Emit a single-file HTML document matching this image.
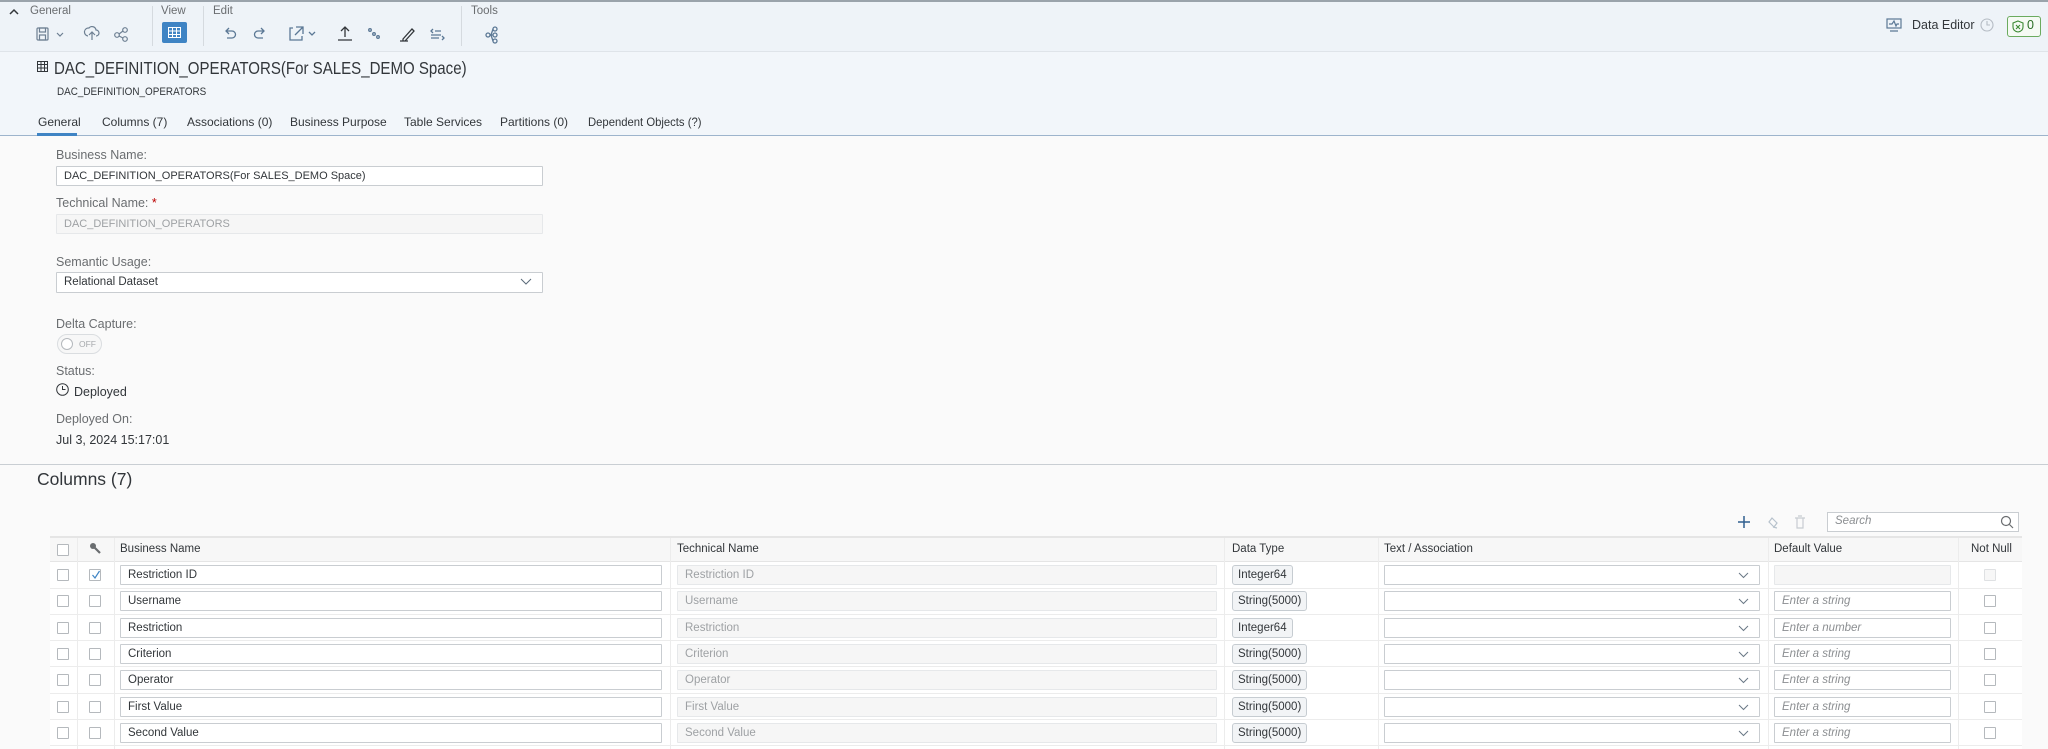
<!DOCTYPE html>
<html><head><meta charset="utf-8">
<style>
*{box-sizing:border-box;margin:0;padding:0}
body{width:2048px;height:749px;overflow:hidden;background:#fafafa;font-family:"Liberation Sans",sans-serif;color:#32363a;position:relative}
.a{position:absolute;white-space:nowrap}
.lbl{font-size:12.5px;color:#6a6d70}
.t{font-size:12.5px;color:#32363a}
.ic{position:absolute}
.inp{position:absolute;height:21px;border:1px solid #c9cdd1;background:#fff;font-size:12px;padding:3px 7px;color:#32363a;border-radius:1px}
.dis{background:#f6f6f6;border-color:#e6e8ea;color:#9ea1a4}
.cb{position:absolute;width:12px;height:12px;border:1px solid #b5b9bd;background:#fff;border-radius:1px}
.tok{position:absolute;height:21px;border:1px solid #c6ccd1;background:#f2f4f6;font-size:11.5px;padding:3px 5px;color:#32363a;border-radius:3px}
.ph{font-style:italic;color:#8b8e91}
.chev{position:absolute;right:10px;top:5px}
</style></head><body>
<div class="a" style="left:0;top:0;width:2048px;height:52px;background:#eef3f8;border-top:2px solid #9aa3ab;border-bottom:1px solid #dfe4e9"></div>
<svg class="ic" style="left:9px;top:8px" width="10" height="8"><path d="M1 6 L5 2 L9 6" stroke="#32363a" stroke-width="1.5" fill="none"/></svg>
<div class="a lbl" style="left:30px;top:5px;font-size:11.5px">General</div>
<div class="a lbl" style="left:161px;top:5px;font-size:11.5px">View</div>
<div class="a lbl" style="left:213px;top:5px;font-size:11.5px">Edit</div>
<div class="a lbl" style="left:471px;top:5px;font-size:11.5px">Tools</div>
<div class="a" style="left:152px;top:6px;width:1px;height:40px;background:#d5dadf"></div>
<div class="a" style="left:203px;top:6px;width:1px;height:40px;background:#d5dadf"></div>
<div class="a" style="left:461px;top:6px;width:1px;height:40px;background:#d5dadf"></div>
<svg class="ic" style="left:36px;top:26px" width="110" height="16" fill="none" stroke="#6d7f92" stroke-width="1.2">
<rect x="1" y="2" width="11" height="12" rx="1"/><rect x="3.5" y="2" width="6" height="4"/><rect x="3.5" y="9" width="6" height="5"/>
<path d="M21 7 l3 3 l3 -3"/>
<path d="M52 10 a4 4 0 0 1 1 -8 a4 4 0 0 1 7 2 a3 3 0 0 1 0 6 M56 14 v-8 M53 9 l3 -3 l3 3"/>
<circle cx="81" cy="9" r="2.3"/><circle cx="89" cy="4" r="2.3"/><circle cx="89" cy="13" r="2.3"/><path d="M83 8 l4 -3 M83 10 l4 2"/>
</svg>
<div class="a" style="left:162px;top:22px;width:25px;height:21px;background:#3f84c4;border-radius:2px"></div>
<svg class="ic" style="left:168px;top:27px" width="13" height="11" stroke="#fff" stroke-width="1" fill="none"><rect x="0.5" y="0.5" width="12" height="10"/><path d="M0.5 4h12M0.5 7.5h12M4.5 0.5v10M8.5 0.5v10"/></svg>
<svg class="ic" style="left:220px;top:24px" width="280" height="20" fill="none" stroke="#5b7895" stroke-width="1.3">
<path d="M9 4 L6 7 L9 10 M6 7 H12 a3.5 3.5 0 0 1 0 7 H7"/>
<path d="M41 4 L44 7 L41 10 M44 7 H38 a3.5 3.5 0 0 0 0 7 H43"/>
<path d="M73 4 H70 V16 H82 V12 M76 3 H83 V10 M83 3 L75 11"/>
<path d="M89 8 l3 3 l3 -3"/>
<path d="M118 16 h14 M125 13 V3 M121 7 l4 -4 l4 4" stroke="#32363a"/>
<circle cx="150" cy="6" r="1.3"/><circle cx="154" cy="10" r="1.3"/><circle cx="158" cy="13" r="1.3"/>
<path d="M183 15 l9 -10 l2 2 l-9 10 h-2 z M180 17 h8" stroke="#32363a"/>
<path d="M213 5 l-2 2 l2 2 M215 7 h6 M211 11 h10 M211 14 h8 M222 12 l2 2 l-2 2"/>
<circle cx="268" cy="11" r="2"/><circle cx="275" cy="5" r="2"/><circle cx="275" cy="11" r="2"/><circle cx="275" cy="17" r="2"/><path d="M270 11h3 M271 11 l2 -6 M271 11 l2 6"/>
</svg>
<svg class="ic" style="left:1886px;top:18px" width="18" height="14" fill="none" stroke="#5b7895" stroke-width="1.2"><rect x="1" y="1" width="14" height="9"/><path d="M4 13 h8 M3 6 h3 l2 -3 l2 5 l1 -2 h2"/></svg>
<div class="a" style="left:1912px;top:18px;font-size:12.5px;color:#32363a">Data Editor</div>
<svg class="ic" style="left:1980px;top:18px" width="14" height="14" fill="none" stroke="#b5bcc4" stroke-width="1.1"><circle cx="7" cy="7" r="6"/><path d="M7 3 v4 h3"/></svg>
<div class="a" style="left:2007px;top:16px;width:34px;height:21px;border:1px solid #6bab5f;border-radius:3px;background:#f5faf4"></div>
<svg class="ic" style="left:2012px;top:20px" width="12" height="13" fill="none" stroke="#3b8a33" stroke-width="1.1"><path d="M6 1 L11 3 V7 Q11 11 6 12 Q1 11 1 7 V3 Z M4 5 l4 4 M8 5 l-4 4"/></svg>
<div class="a" style="left:2027px;top:18px;font-size:12.5px;color:#2b6e25">0</div>
<div class="a" style="left:0;top:52px;width:2048px;height:84px;background:#f2f6fa;border-bottom:1px solid #9db4cc"></div>
<svg class="ic" style="left:37px;top:61px" width="11" height="11" fill="none" stroke="#32363a" stroke-width="1"><rect x="0.5" y="0.5" width="10" height="10"/><path d="M0.5 3.5h10M0.5 7h10M4 0.5v10M7.5 0.5v10"/></svg>
<div class="a" style="left:54px;top:58px;font-size:17.5px;color:#32363a;transform:scaleX(0.86);transform-origin:0 0">DAC_DEFINITION_OPERATORS(For SALES_DEMO Space)</div>
<div class="a" style="left:57px;top:86px;font-size:11px;color:#32363a;transform:scaleX(0.9);transform-origin:0 0">DAC_DEFINITION_OPERATORS</div>
<div class="a t" style="left:38px;top:115px;font-size:12px">General</div>
<div class="a t" style="left:102px;top:115px;font-size:12px">Columns (7)</div>
<div class="a t" style="left:187px;top:115px;font-size:12px">Associations (0)</div>
<div class="a t" style="left:290px;top:115px;font-size:12px">Business Purpose</div>
<div class="a t" style="left:404px;top:115px;font-size:12px">Table Services</div>
<div class="a t" style="left:500px;top:115px;font-size:12px">Partitions (0)</div>
<div class="a t" style="left:588px;top:115px;font-size:12px;transform:scaleX(0.94);transform-origin:0 0">Dependent Objects (?)</div>
<div class="a" style="left:37px;top:133px;width:40px;height:3px;background:#3f84c4"></div>
<div class="a lbl" style="left:56px;top:148px">Business Name:</div>
<div class="inp" style="left:56px;top:166px;width:487px;height:20px;font-size:11px">DAC_DEFINITION_OPERATORS(For SALES_DEMO Space)</div>
<div class="a lbl" style="left:56px;top:196px">Technical Name:<span style="color:#bb0000"> *</span></div>
<div class="inp dis" style="left:56px;top:214px;width:487px;height:20px;font-size:11px">DAC_DEFINITION_OPERATORS</div>
<div class="a lbl" style="left:56px;top:255px">Semantic Usage:</div>
<div class="inp" style="left:56px;top:272px;width:487px;height:21px;font-size:11.5px">Relational Dataset<svg class="chev" width="12" height="8"><path d="M1 1 L6 6 L11 1" stroke="#5b6b7a" fill="none"/></svg></div>
<div class="a lbl" style="left:56px;top:317px">Delta Capture:</div>
<div class="a" style="left:57px;top:334px;width:45px;height:20px;border:1px solid #dadde0;border-radius:10px;background:#f7f7f7"></div>
<div class="a" style="left:61px;top:338px;width:12px;height:12px;border:1px solid #b5b9bd;border-radius:50%;background:#fff"></div>
<div class="a" style="left:79px;top:339px;font-size:8.5px;color:#a6a9ac">OFF</div>
<div class="a lbl" style="left:56px;top:364px">Status:</div>
<svg class="ic" style="left:56px;top:383px" width="13" height="13" fill="none" stroke="#32363a" stroke-width="1"><circle cx="6.5" cy="6.5" r="5.8"/><path d="M6.5 3 v3.5 h3"/></svg>
<div class="a t" style="left:74px;top:385px">Deployed</div>
<div class="a lbl" style="left:56px;top:412px">Deployed On:</div>
<div class="a t" style="left:56px;top:433px">Jul 3, 2024 15:17:01</div>
<div class="a" style="left:0;top:464px;width:2048px;height:1px;background:#c9ced3"></div>
<div class="a" style="left:37px;top:469px;font-size:17.5px;color:#32363a">Columns (7)</div>
<svg class="ic" style="left:1737px;top:514px" width="80" height="16" fill="none" stroke-width="1.5">
<path d="M7 2 v12 M1 8 h12" stroke="#2f5f8f"/>
<path d="M35 4 l5 5 l-3 4 l-5 -5 z M36 13 l4 1" stroke="#b7c2cc" stroke-width="1.2"/>
<path d="M58 4 h10 M60 4 v10 h6 v-10 M61 2 h4" stroke="#c7ccd1" stroke-width="1.2"/>
</svg>
<div class="a" style="left:1827px;top:512px;width:192px;height:20px;border:1px solid #c9cdd1;background:#fff"></div>
<div class="a ph" style="left:1835px;top:515px;font-size:11.5px">Search</div>
<svg class="ic" style="left:2000px;top:515px" width="14" height="14" fill="none" stroke="#6a6d70" stroke-width="1.2"><circle cx="6" cy="6" r="4.5"/><path d="M9.5 9.5 L13 13"/></svg>
<div class="a" style="left:50px;top:536px;width:1972px;height:213px;background:#fff;border-top:2px solid #e5e5e5"></div>
<div class="a" style="left:50px;top:538px;width:1972px;height:24px;background:#f7f7f7;border-bottom:1px solid #e5e5e5"></div>
<div id="grid"></div>
<div class="cb" style="left:57px;top:544px"></div>
<svg class="ic" style="left:89px;top:542px" width="12" height="12"><circle cx="4" cy="4" r="3" fill="#6a6d70"/><path d="M5 5 L11 11" stroke="#6a6d70" stroke-width="2.2"/></svg>
<div class="a t" style="left:120px;top:543px;font-size:11.5px">Business Name</div>
<div class="a t" style="left:677px;top:543px;font-size:11.5px">Technical Name</div>
<div class="a t" style="left:1232px;top:543px;font-size:11.5px">Data Type</div>
<div class="a t" style="left:1384px;top:543px;font-size:11.5px">Text / Association</div>
<div class="a t" style="left:1774px;top:543px;font-size:11.5px">Default Value</div>
<div class="a t" style="left:1971px;top:543px;font-size:11.5px">Not Null</div>
<script>
var cols=[77,114,670,1224,1378,1768,1958];
var h='';
cols.forEach(function(x){h+='<div class="a" style="left:'+x+'px;top:538px;width:1px;height:211px;background:#ececec"></div>';});
var rows=[["Restriction ID","Integer64",""],["Username","String(5000)","Enter a string"],["Restriction","Integer64","Enter a number"],["Criterion","String(5000)","Enter a string"],["Operator","String(5000)","Enter a string"],["First Value","String(5000)","Enter a string"],["Second Value","String(5000)","Enter a string"]];
rows.forEach(function(r,i){
 var y=562+i*26.3;
 h+='<div class="a" style="left:50px;top:'+(y+25.5)+'px;width:1972px;height:1px;background:#ececec"></div>';
 h+='<div class="cb" style="left:57px;top:'+(y+7)+'px"></div>';
 h+='<div class="cb" style="left:89px;top:'+(y+7)+'px">'+(i==0?'<svg style="position:absolute;left:1px;top:0" width="10" height="10"><path d="M1.5 5 L4 8 L8.5 1" stroke="#3f84c4" stroke-width="1.2" fill="none"/></svg>':'')+'</div>';
 h+='<div class="inp" style="left:120px;top:'+(y+3)+'px;width:542px;height:20px;font-size:11.5px">'+r[0]+'</div>';
 h+='<div class="inp dis" style="left:677px;top:'+(y+3)+'px;width:540px;height:20px;font-size:11.5px">'+r[0]+'</div>';
 h+='<div class="tok" style="left:1232px;top:'+(y+3)+'px;height:20px">'+r[1]+'</div>';
 h+='<div class="inp" style="left:1384px;top:'+(y+3)+'px;width:376px;height:20px"><svg class="chev" style="top:6px" width="11" height="7"><path d="M1 1 L5.5 5.5 L10 1" stroke="#6a7886" fill="none"/></svg></div>';
 h+=r[2]?'<div class="inp ph" style="left:1774px;top:'+(y+3)+'px;width:177px;height:20px;font-size:11.5px">'+r[2]+'</div>':'<div class="inp dis" style="left:1774px;top:'+(y+3)+'px;width:177px;height:20px"></div>';
 h+='<div class="cb" style="left:1984px;top:'+(y+7)+'px;'+(i==0?'border-color:#dfe1e3;background:#f7f7f7':'')+'"></div>';
});
document.getElementById('grid').innerHTML=h;
</script>
</body></html>
